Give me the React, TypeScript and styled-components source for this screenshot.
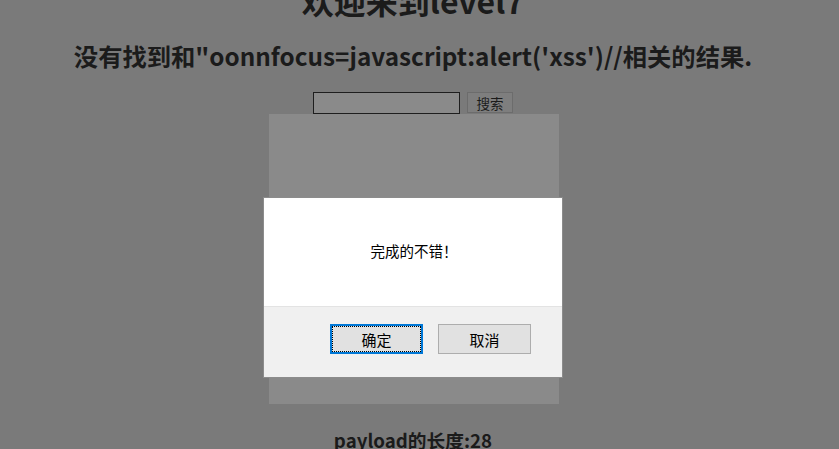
import React from 'react';
import styled, { createGlobalStyle } from 'styled-components';

const GlobalStyle = createGlobalStyle`
    html, body {
        margin: 0;
        padding: 0;
        background: #7a7a7a;
        overflow: hidden;
    }
    body {
        font-family: 'Noto Sans CJK SC', 'Noto Sans', sans-serif;
        color: #1b1b1b;
    }
`;

const Page = styled.div`
    width: 826px;
    display: flex;
    flex-direction: column;
    align-items: center;
`;

const Title = styled.h1`
    margin: -20px 0 0;
    font-size: 32px;
    line-height: 40px;
    font-weight: 700;
`;

const Result = styled.h2`
    margin: 20px 0 0;
    font-size: 24.3px;
    line-height: 32px;
    font-weight: 700;
    white-space: nowrap;
`;

const SearchForm = styled.form`
    margin-top: 20px;
    display: flex;
    align-items: flex-start;
    gap: 7px;
    height: 22px;
`;

const SearchInput = styled.input`
    box-sizing: border-box;
    width: 147px;
    height: 22px;
    margin: 0;
    border: 1px solid #1e1e1e;
    background: #8a8a8a;
`;

const SearchButton = styled.button`
    box-sizing: border-box;
    width: 46px;
    height: 21px;
    margin: 0;
    padding: 0;
    border: 1px solid #6c6c6c;
    background: #7e7e7e;
    color: #1b1b1b;
    font-family: inherit;
    font-size: 13.5px;
    line-height: 18px;
`;

const Picture = styled.div`
    width: 290px;
    height: 290px;
    background: #8a8a8a;
    margin-left: 1px;
`;

const Length = styled.h3`
    margin: 24px 0 0;
    font-size: 18.72px;
    line-height: 24px;
    font-weight: 700;
`;

const Dialog = styled.div`
    position: fixed;
    left: 263px;
    top: 197px;
    box-sizing: border-box;
    width: 300px;
    height: 181px;
    border: 1px solid #8c8c8c;
    background: #ffffff;
    display: flex;
    flex-direction: column;
    font-family: 'Noto Sans CJK SC', sans-serif;
    color: #000;
`;

const Message = styled.div`
    height: 108px;
    display: flex;
    align-items: center;
    justify-content: center;
    padding: 0 0 4px 2px;
    box-sizing: border-box;
    font-size: 14.5px;
`;

const Footer = styled.div`
    flex: 1;
    background: #f0f0f0;
    border-top: 1px solid #e3e3e3;
    display: flex;
    justify-content: flex-end;
    align-items: flex-start;
    gap: 15px;
    padding: 17px 31px 0 0;
`;

const DialogButton = styled.button<{ $primary?: boolean }>`
    box-sizing: border-box;
    width: 93px;
    height: 30px;
    margin: 0;
    padding: 0;
    background: #e1e1e1;
    border: ${({ $primary }) => ($primary ? '2px solid #0078d7' : '1px solid #adadad')};
    outline: ${({ $primary }) => ($primary ? '1px dotted #000' : 'none')};
    outline-offset: -3px;
    font-family: inherit;
    font-size: 15px;
    color: #000;
`;

export default function App() {
    return (
        <>
            <GlobalStyle />
            <Page>
                <Title>欢迎来到level7</Title>
                <Result>没有找到和"oonnfocus=javascript:alert('xss')//相关的结果.</Result>
                <SearchForm>
                    <SearchInput name='keyword' defaultValue='' />
                    <SearchButton type='button'>搜索</SearchButton>
                </SearchForm>
                <Picture />
                <Length>payload的长度:28</Length>
            </Page>
            <Dialog role='alertdialog'>
                <Message>完成的不错！</Message>
                <Footer>
                    <DialogButton $primary>确定</DialogButton>
                    <DialogButton>取消</DialogButton>
                </Footer>
            </Dialog>
        </>
    );
}
